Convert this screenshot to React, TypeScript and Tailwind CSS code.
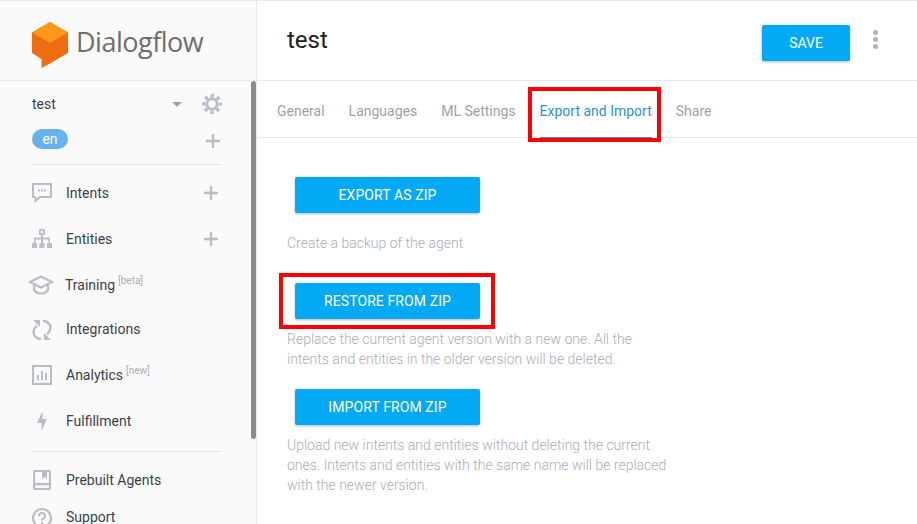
import React from "react";

const Plus = ({ className = "" }: { className?: string }) => (
  <svg viewBox="0 0 14 14" className={`w-[14px] h-[14px] ${className}`} fill="#b8bdc9">
    <path d="M5.800 0h2.400v5.800H14v2.400H8.200V14H5.800V8.200H0V5.800h5.800z" />
  </svg>
);

const Logo = () => (
  <svg viewBox="0 0 36 46" className="w-[36px] h-[46px]">
    <path d="M18 0 36 10.500V31L18 41.500 9.500 46V37L0 31V10.500z" fill="#ef6c12" />
    <path d="M18 0 36 10.500 18 21 0 10.500z" fill="#ff9819" />
  </svg>
);

// eight teeth, drawn as a dashed ring round a plain ring
const Gear = () => (
  <svg viewBox="0 0 20 20" className="w-[20px] h-[20px]" fill="none" stroke="#b8bdc9">
    <circle cx="10" cy="10" r="5.200" strokeWidth="3" />
    <circle cx="10" cy="10" r="8.300" strokeWidth="3.400" strokeDasharray="3.300 3.220" strokeDashoffset="1.650" />
  </svg>
);

const IntentsIcon = () => (
  <svg viewBox="0 0 20 20" className="w-[20px] h-[20px]">
    <path d="M1 1h18v13H8l-4.500 4v-4H1z" fill="none" stroke="#b8bdc9" strokeWidth="2" />
    <path d="M6 6.500h2v2H6zM9 6.500h2v2H9zM12 6.500h2v2h-2z" fill="#b8bdc9" />
  </svg>
);

const EntitiesIcon = () => (
  <svg viewBox="0 0 20 20" className="w-[20px] h-[20px]" fill="#b8bdc9">
    <path d="M7 0h6v6h-2v2.500h7V14h2v5h-5v-5h1.500v-3.500H11V14h1.500v5h-5v-5H9v-3.500H3.500V14H5v5H0v-5h2V8.500h7V6H7zm1.800 1.700v2.600h2.400V1.700z" />
  </svg>
);

const TrainingIcon = () => (
  <svg viewBox="0 0 26 20" className="w-[26px] h-[20px]">
    <path d="M13 1.500 24 7l-11 5.500L2 7z" fill="none" stroke="#b8bdc9" strokeWidth="2.200" />
    <path d="M6 10v5c2 2.500 4.500 3.500 7 3.500s5-1 7-3.500v-5" fill="none" stroke="#b8bdc9" strokeWidth="2.200" />
  </svg>
);

const IntegrationsIcon = () => (
  <svg viewBox="0 0 20 20" className="w-[20px] h-[20px]" fill="none" stroke="#b8bdc9" strokeWidth="2.400">
    <path d="M5 5.500C1 8.500 .5 14 3.500 16.800 5.200 18.300 7 19 9.200 19" />
    <path d="M11 1c2 0 3.800.7 5.300 2 3.200 2.800 2.800 8.300-1.300 11.500" />
    <path d="M1 0h7v7z" fill="#b8bdc9" stroke="none" />
    <path d="M12 13l7 7h-7z" fill="#b8bdc9" stroke="none" />
  </svg>
);

const AnalyticsIcon = () => (
  <svg viewBox="0 0 20 20" className="w-[20px] h-[20px]">
    <rect x="1" y="1" width="18" height="18" fill="none" stroke="#b8bdc9" strokeWidth="2.200" />
    <path d="M5 10h2v5H5zM9 6h2v9H9zM13 8h2v7h-2z" fill="#b8bdc9" />
  </svg>
);

const BoltIcon = () => (
  <svg viewBox="0 0 10 20" className="w-[10px] h-[20px]" fill="#b8bdc9">
    <path d="M5.500 0v8H10L4.500 20v-8H0z" />
  </svg>
);

const BookIcon = () => (
  <svg viewBox="0 0 18 20" className="w-[18px] h-[20px]">
    <path d="M2.500 1h13a1.500 1.500 0 0 1 1.500 1.500v15a1.500 1.500 0 0 1-1.500 1.500h-13A1.500 1.500 0 0 1 1 17.500v-15A1.500 1.500 0 0 1 2.500 1z" fill="none" stroke="#b8bdc9" strokeWidth="2.200" />
    <path d="M1 13h16v2.200H1zM9 1h5v8l-2.500-2L9 9z" fill="#b8bdc9" />
  </svg>
);

const HelpIcon = () => (
  <svg viewBox="0 0 20 20" className="w-[20px] h-[20px]">
    <circle cx="10" cy="10" r="9" fill="none" stroke="#b8bdc9" strokeWidth="2.200" />
    <path d="M7 8a3 3 0 1 1 4.500 2.500C10.500 11 10 11.500 10 12.500" fill="none" stroke="#b8bdc9" strokeWidth="2" />
    <rect x="9" y="14" width="2" height="2" fill="#b8bdc9" />
  </svg>
);

const NavRow = ({
  icon,
  label,
  tag,
  plus,
  height = "h-[46px]",
  labelClass = "ml-[14px]",
}: {
  icon: React.ReactNode;
  label: string;
  tag?: string;
  plus?: boolean;
  height?: string;
  labelClass?: string;
}) => (
  <div className={`flex items-center ${height} pl-[32px] pr-[38px] shrink-0`}>
    <div className="w-[20px] flex justify-center shrink-0">{icon}</div>
    <span className={`${labelClass} text-[14px] text-[#3b3f4c]`}>{label}</span>
    {tag && <span className="ml-[3px] -mt-[9px] text-[10px] text-[#a9adba]">{tag}</span>}
    {plus && <Plus className="ml-auto" />}
  </div>
);

const BlueButton = ({ children }: { children: React.ReactNode }) => (
  <button className="w-[185px] h-[36px] rounded-[2px] bg-[#03a9f4] text-white text-[14px] font-normal tracking-[0.1px] shadow-[0_1px_3px_rgba(0,0,0,0.3)]">
    {children}
  </button>
);

const tabs = ["General", "Languages", "ML Settings", "Export and Import", "Share"];

export default function App() {
  return (
    <div className="relative flex w-[917px] h-[524px] overflow-hidden bg-white font-['Roboto',sans-serif] border-t border-[#e8e8e8]">
      <aside className="relative w-[257px] h-full shrink-0 bg-[#fafafa] border-r border-[#e8e8e8] flex flex-col overflow-hidden">
        <div className="h-[80px] shrink-0 flex items-center pl-[32px] pt-[8px] border-b border-[#e8e8e8]">
          <Logo />
          <span className="ml-[8px] -mt-[4px] text-[27px] text-[#6e6e6e] font-['Open_Sans',sans-serif] tracking-[-0.5px]">Dialogflow</span>
        </div>

        <div className="flex items-center h-[46px] pl-[32px] pr-[34px] shrink-0">
          <span className="text-[14px] text-[#3b3f4c]">test</span>
          <span className="ml-auto mr-[20px] w-0 h-0 border-x-[5px] border-x-transparent border-t-[5px] border-t-[#9ca1b0]" />
          <Gear />
        </div>
        <div className="flex items-center h-[24px] pl-[32px] pr-[36px] shrink-0">
          <span className="w-[36px] h-[20px] rounded-full bg-[#66b2ec] text-white text-[14px] flex items-center justify-center">en</span>
          <Plus className="ml-auto mt-[4px]" />
        </div>
        <div className="mx-[32px] w-[190px] mt-[13px] h-px bg-[#e4e4e4] shrink-0" />

        <div className="h-[5px] shrink-0" />
        <NavRow icon={<IntentsIcon />} label="Intents" plus />
        <NavRow icon={<EntitiesIcon />} label="Entities" plus />
        <NavRow icon={<div className="-ml-[3px]"><TrainingIcon /></div>} label="Training" tag="[beta]" height="h-[45px]" labelClass="ml-[13px] mt-[2px]" />
        <NavRow icon={<IntegrationsIcon />} label="Integrations" height="h-[45px]" />
        <NavRow icon={<AnalyticsIcon />} label="Analytics" tag="[new]" />
        <NavRow icon={<BoltIcon />} label="Fulfillment" />
        <div className="mx-[32px] w-[190px] mt-[7px] h-px bg-[#e4e4e4] shrink-0" />
        <div className="h-[5px] shrink-0" />
        <NavRow icon={<BookIcon />} label="Prebuilt Agents" />
        <NavRow icon={<HelpIcon />} label="Support" height="h-[29px]" />

        <div className="absolute right-0 top-[80px] w-[5px] h-[358px] rounded-[3px] bg-[#8b8b8b]" />
      </aside>

      <main className="flex-1 flex flex-col min-w-0">
        <header className="h-[80px] shrink-0 flex items-center pl-[30px] pr-[39px] border-b border-[#e8e8e8]">
          <h1 className="text-[24px] text-[#212121] -mt-[2px]">test</h1>
          <button className="ml-auto mt-[5px] w-[88px] h-[36px] pt-[1px] rounded-[2px] bg-[#03a9f4] text-white text-[14px] shadow-[0_1px_3px_rgba(0,0,0,0.3)]">SAVE</button>
          <div className="ml-[23px] flex flex-col gap-[2px] -mt-[3px]">
            <span className="w-[5px] h-[5px] rounded-full bg-[#b3b3b3]" />
            <span className="w-[5px] h-[5px] rounded-full bg-[#b3b3b3]" />
            <span className="w-[5px] h-[5px] rounded-full bg-[#b3b3b3]" />
          </div>
        </header>

        <nav className="h-[57px] shrink-0 flex pl-[20px] pt-[4px] gap-[24px] border-b border-[#e8e8e8]">
          {tabs.map((tab) =>
            tab === "Export and Import" ? (
              <span key={tab} className="relative flex items-center text-[14px] text-[#2f8fdc]">
                {tab}
                <span className="absolute left-0 right-0 -bottom-px h-px bg-[#2f8fdc]" />
              </span>
            ) : (
              <span key={tab} className="flex items-center text-[14px] text-[#9ca1b0]">{tab}</span>
            )
          )}
        </nav>

        <section className="flex-1 pl-[30px] pt-[39px] text-[14px] leading-[20px] font-light text-[#a9adba]">
          <div className="pl-[8px]"><BlueButton>EXPORT AS ZIP</BlueButton></div>
          <p className="mt-[20px]">Create a backup of the agent</p>
          <div className="relative pl-[8px] mt-[30px]">
            <BlueButton>RESTORE FROM ZIP</BlueButton>
            <div className="absolute -left-[8px] -top-[10px] w-[216px] h-[56px] border-[4px] border-[#ff0000]" />
          </div>
          <p className="mt-[10px]">Replace the current agent version with a new one. All the<br />intents and entities in the older version will be deleted.</p>
          <div className="pl-[8px] mt-[20px]"><BlueButton>IMPORT FROM ZIP</BlueButton></div>
          <p className="mt-[10px]">Upload new intents and entities without deleting the current<br />ones. Intents and entities with the same name will be replaced<br />with the newer version.</p>
        </section>
      </main>

      <div className="absolute left-[528px] top-[86px] w-[133px] h-[55px] border-[4px] border-[#ff0000]" />
    </div>
  );
}
